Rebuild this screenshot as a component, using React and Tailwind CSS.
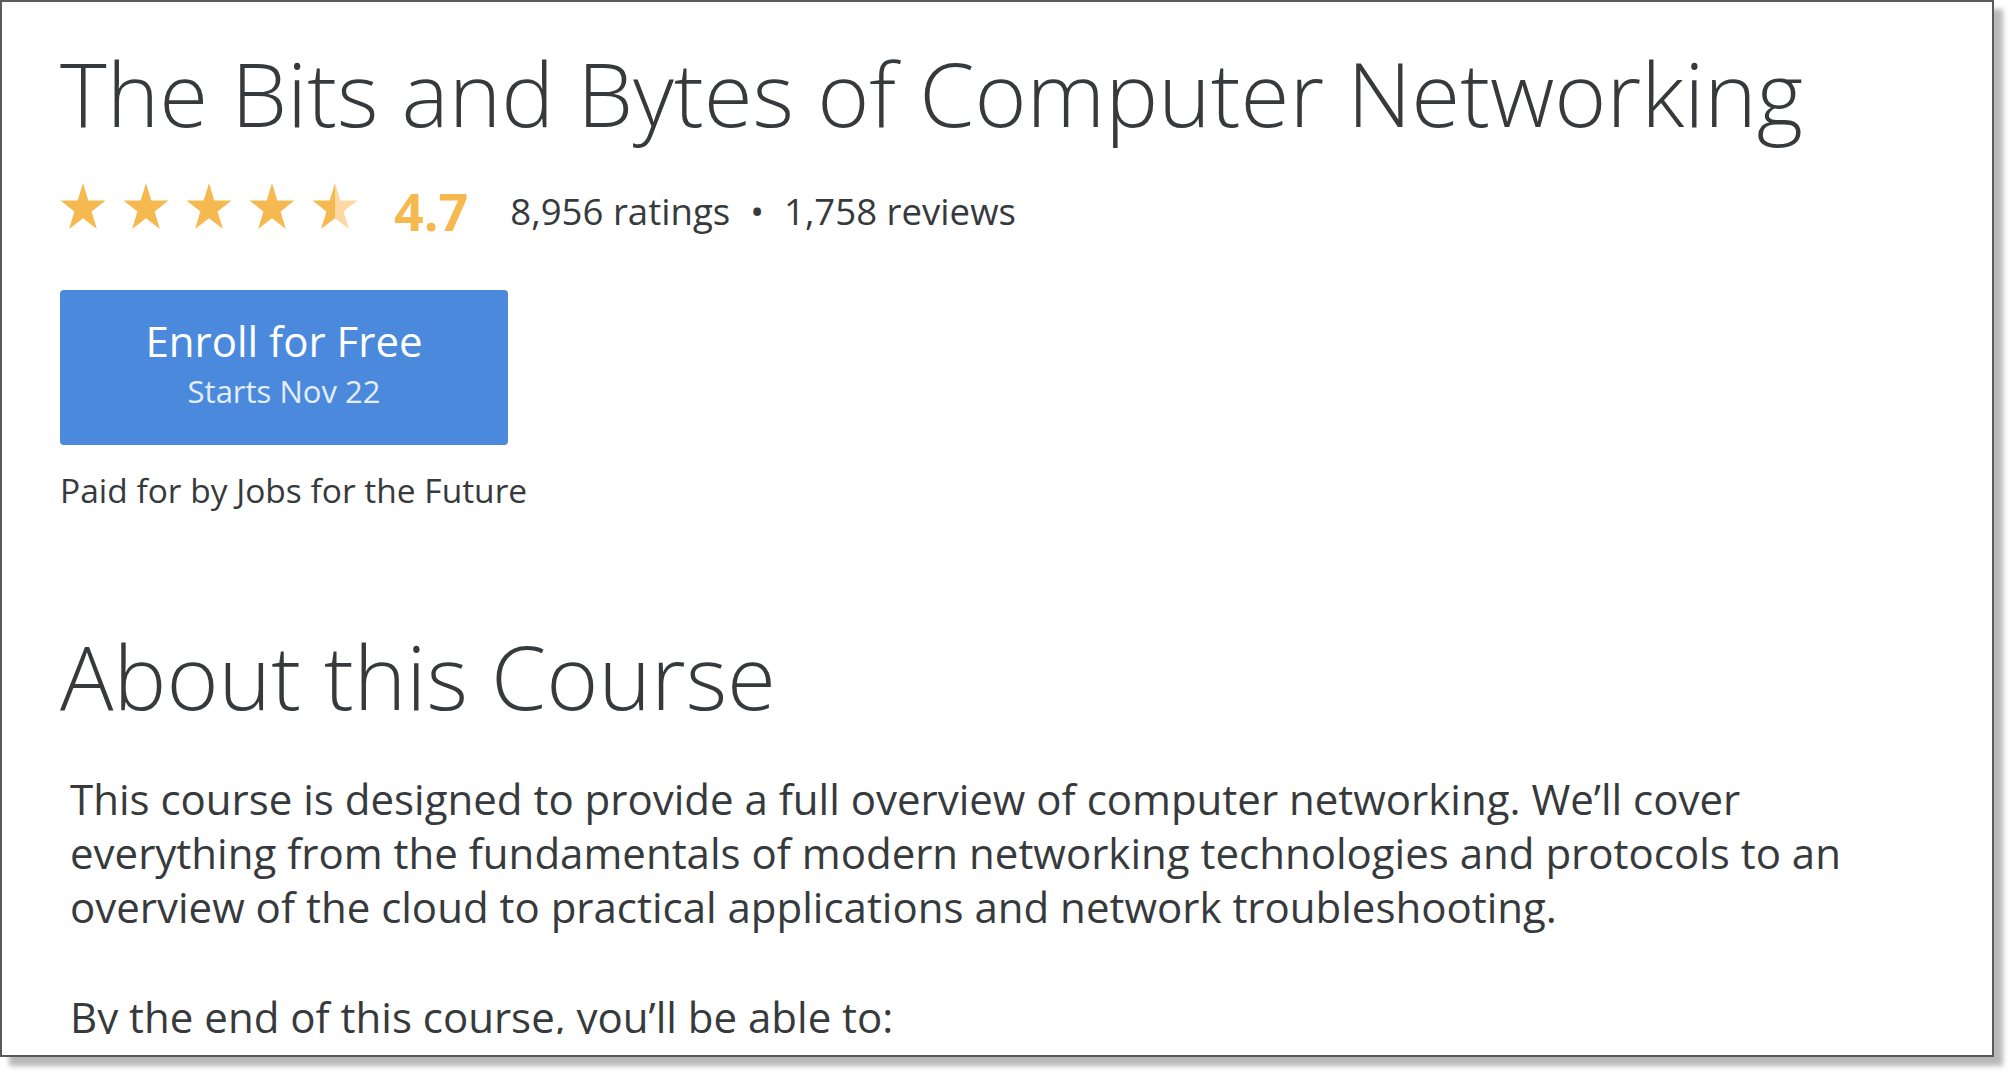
import React from "react";

const Star = ({ half }) => (
  <svg width="46" height="46" viewBox="0 0 45 46" className="shrink-0">
    {half && (
      <defs>
        <linearGradient id="halfStar" x1="0" x2="1" y1="0" y2="0">
          <stop offset="50%" stopColor="#f5b94f" />
          <stop offset="50%" stopColor="#fcd9a2" />
        </linearGradient>
      </defs>
    )}
    <polygon
      points="22.5,0 27.81,17.57 45,17.57 31.09,28.43 36.41,46 22.5,35.14 8.59,46 13.91,28.43 0,17.57 17.19,17.57"
      fill={half ? "url(#halfStar)" : "#f5b94f"}
    />
  </svg>
);

const App = () => {
  return (
    <div className="w-[2010px] h-[1074px] bg-white font-['Open_Sans','Liberation_Sans',sans-serif] text-[#373a3c]">
      <div className="w-[1994px] h-[1057px] border-2 border-[#5a5a5a] bg-white shadow-[9px_9px_5px_rgba(0,0,0,0.28)]">
        <div className="h-[1032px] overflow-hidden pl-[58px] pt-[41px]">
          <h1 className="text-[89px] leading-[100px] font-light whitespace-nowrap">
            The Bits and Bytes of Computer Networking
          </h1>

          <div className="mt-[34px] h-[60px] flex items-start">
            <div className="mt-[6px] flex gap-[17px]">
              <Star />
              <Star />
              <Star />
              <Star />
              <Star half />
            </div>
            <span className="ml-[36px] mt-[4px] text-[52px] leading-[60px] font-bold text-[#f5b94f]">
              4.7
            </span>
            <span className="ml-[42px] mt-[4px] text-[36.6px] leading-[60px]">
              8,956 ratings
            </span>
            <span className="mx-[20px] mt-[4px] text-[36.6px] leading-[60px]">•</span>
            <span className="mt-[4px] text-[36.6px] leading-[60px]">1,758 reviews</span>
          </div>

          <button className="mt-[53px] w-[448px] h-[155px] rounded-[4px] bg-[#4a89dc] text-white flex flex-col items-center pt-[27px]">
            <span className="text-[42px] leading-[48px]">Enroll for Free</span>
            <span className="mt-[6px] text-[31px] leading-[40px] text-white/85">
              Starts Nov 22
            </span>
          </button>

          <p className="mt-[23px] text-[33.5px] leading-[44px]">
            Paid for by Jobs for the Future
          </p>

          <h2 className="mt-[114px] text-[89px] leading-[100px] font-light">
            About this Course
          </h2>

          <div className="ml-[10px] mt-[46px] w-[1800px] text-[42px] leading-[54px]">
            <p>
              This course is designed to provide a full overview of computer networking. We’ll cover
              everything from the fundamentals of modern networking technologies and protocols to an
              overview of the cloud to practical applications and network troubleshooting.
            </p>
            <p className="mt-[56px]">By the end of this course, you’ll be able to:</p>
          </div>
        </div>
      </div>
    </div>
  );
};

export default App;
